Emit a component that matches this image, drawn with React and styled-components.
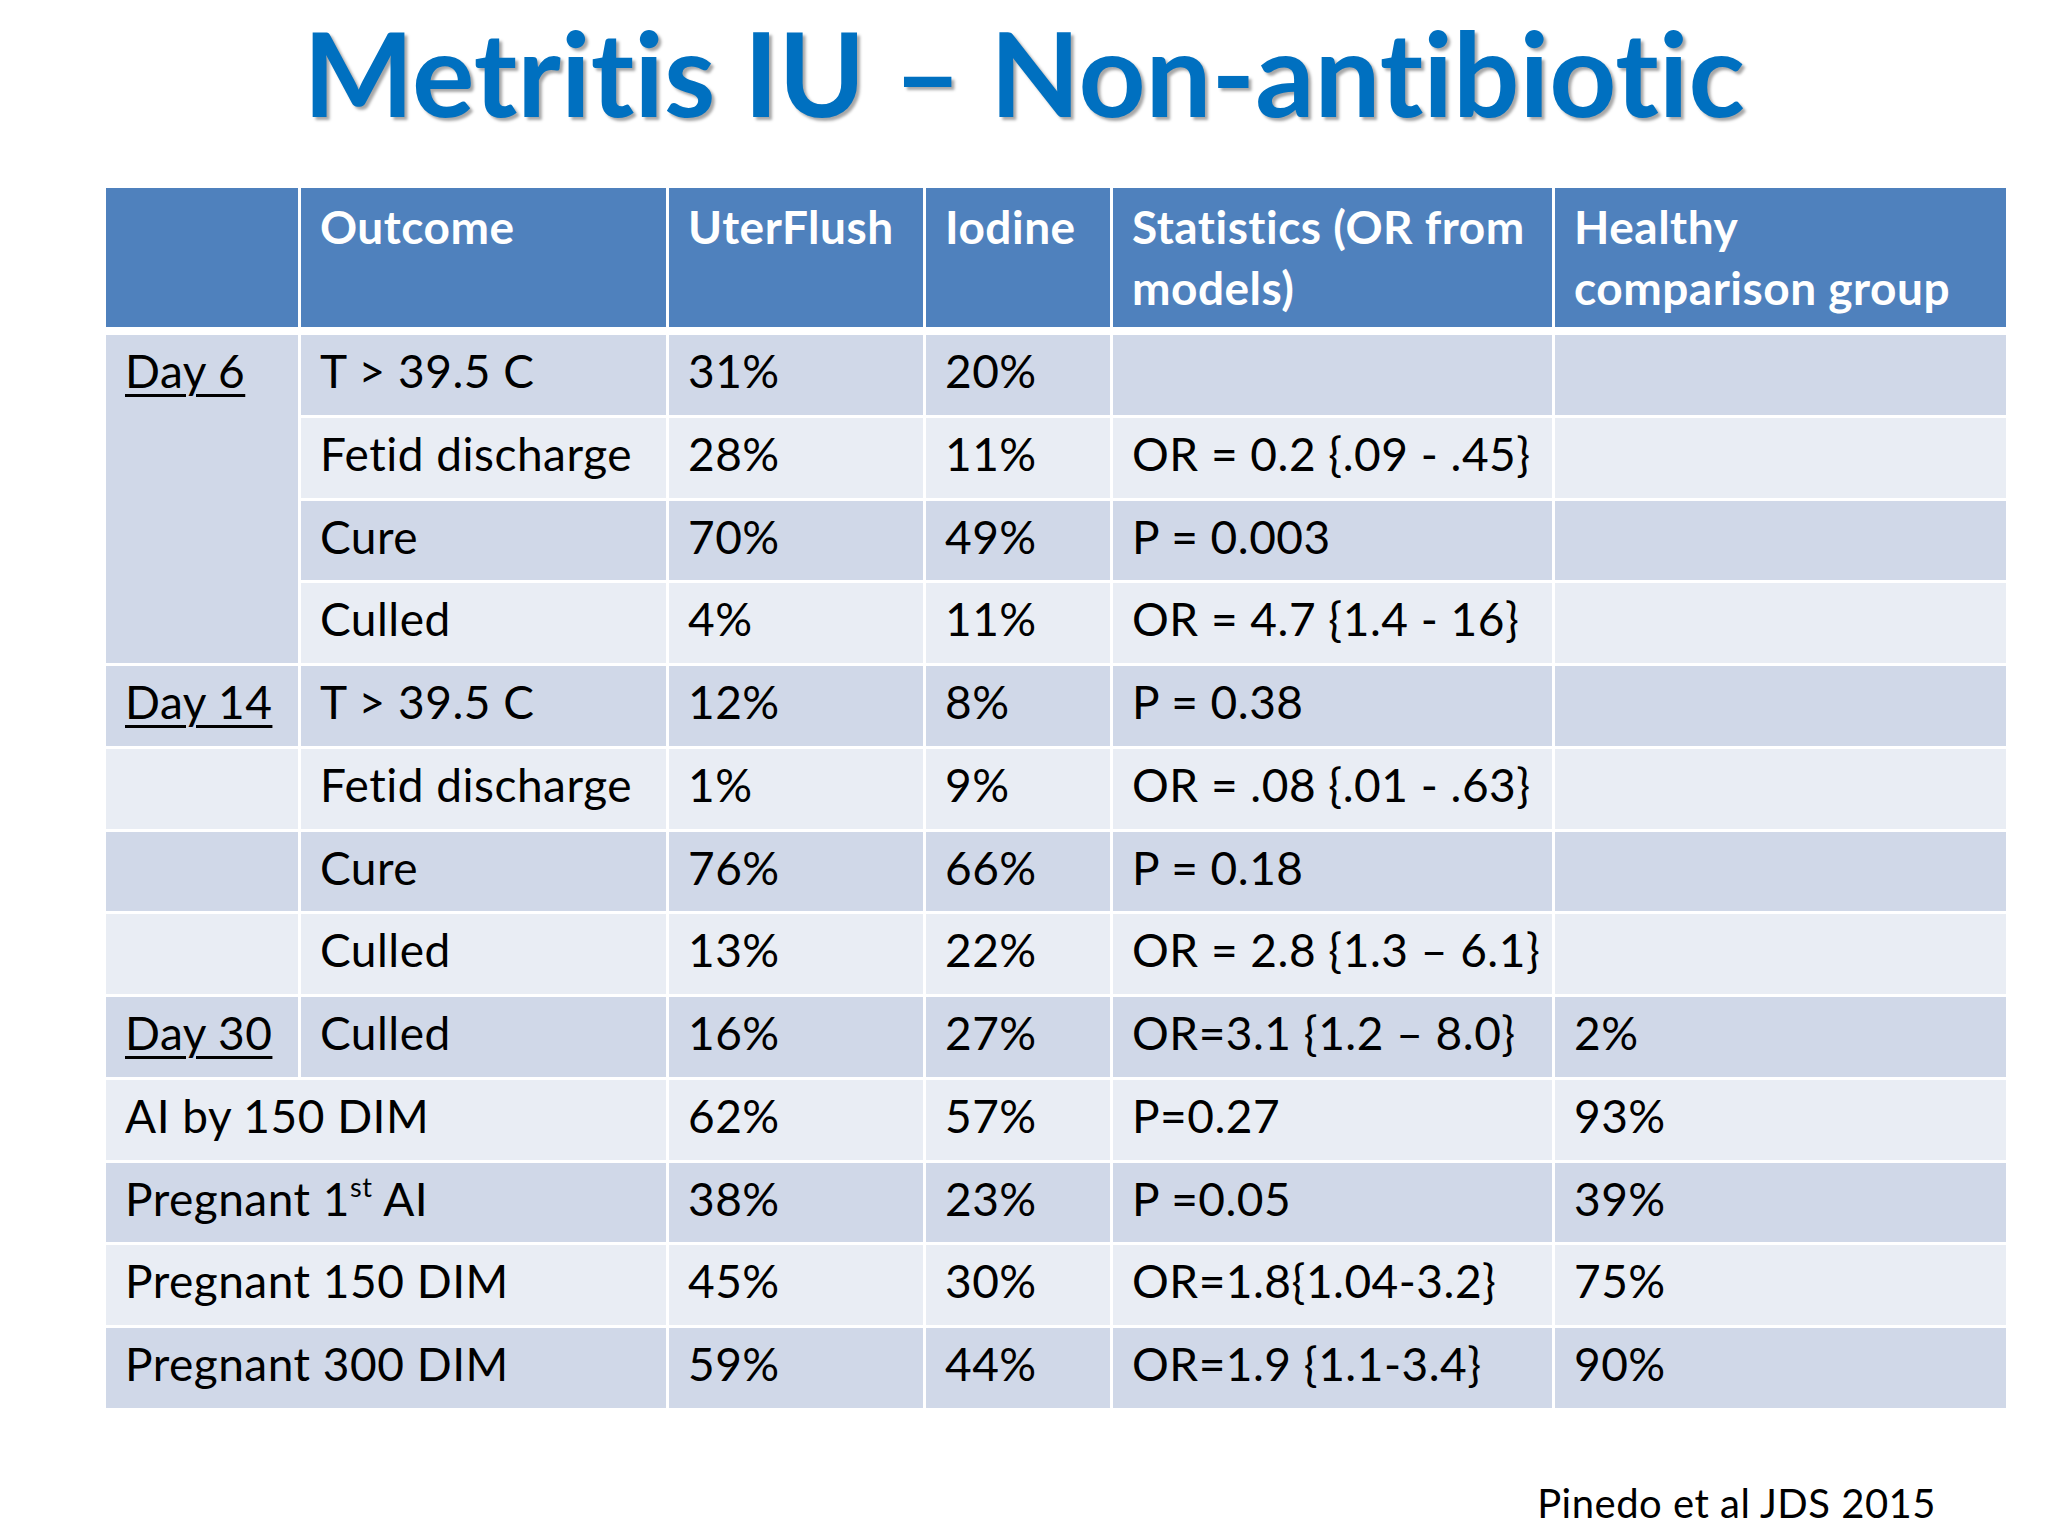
import styled, { createGlobalStyle } from "styled-components";

const GlobalStyle = createGlobalStyle`
  html, body {
    margin: 0;
    padding: 0;
    background: #ffffff;
  }
  body {
    font-family: Lato, "Open Sans", sans-serif;
    font-variant-ligatures: none;
    color: #000000;
  }
`;

const COLS = "192px 365px 254px 184px 439px 451px";

const Slide = styled.div`
  width: 2048px;
  height: 1536px;
  box-sizing: border-box;
  padding: 0 42px 0 106px;
  display: flex;
  flex-direction: column;
`;

const Title = styled.h1`
  margin: 0 0 0 -106px;
  width: 2048px;
  height: 188px;
  box-sizing: border-box;
  padding-top: 0;
  text-align: center;
  font-family: Lato, sans-serif;
  font-weight: 700;
  font-size: 117px;
  line-height: 144px;
  color: #0070c0;
  text-shadow: 3px 3px 3px rgba(0, 0, 0, 0.35);
`;

const HeadGrid = styled.div`
  display: grid;
  grid-template-columns: ${COLS};
  column-gap: 3px;
  height: 139px;
`;

const HeadCell = styled.div`
  background: #4f81bd;
  color: #ffffff;
  font-weight: 700;
  font-size: 46px;
  letter-spacing: 0.5px;
  line-height: 61px;
  padding: 8px 8px 0 19px;
  white-space: nowrap;
`;

const BodyGrid = styled.div`
  display: grid;
  grid-template-columns: ${COLS};
  grid-auto-rows: 79.75px;
  gap: 3px;
  margin-top: 8px;
`;

const Cell = styled.div`
  grid-column: span ${(p) => p.$cols || 1};
  grid-row: span ${(p) => p.$rows || 1};
  background: ${(p) => (p.$dark ? "#d0d8e8" : "#e9edf4")};
  font-size: 46px;
  letter-spacing: 0.5px;
  line-height: 60px;
  padding: 6px 8px 0 19px;
  white-space: nowrap;
  sup {
    font-size: 27px;
    line-height: 0;
    vertical-align: 19px;
  }
`;

const Day = styled.span`
  text-decoration: underline;
  text-decoration-thickness: 3px;
  text-underline-offset: 6px;
`;

const Footer = styled.div`
  margin-top: 72px;
  padding-right: 70px;
  text-align: right;
  font-size: 40px;
  letter-spacing: 0.5px;
  line-height: 46px;
`;

const headers = [
  [],
  ["Outcome"],
  ["UterFlush"],
  ["Iodine"],
  ["Statistics (OR from", "models)"],
  ["Healthy", "comparison group"],
];

const rows = [
  { day: "Day 6", daySpan: 4, outcome: "T > 39.5 C", uf: "31%", io: "20%", stat: "" },
  { outcome: "Fetid discharge", uf: "28%", io: "11%", stat: "OR = 0.2 {.09 - .45}" },
  { outcome: "Cure", uf: "70%", io: "49%", stat: "P = 0.003" },
  { outcome: "Culled", uf: "4%", io: "11%", stat: "OR = 4.7 {1.4 - 16}" },
  { day: "Day 14", outcome: "T > 39.5 C", uf: "12%", io: "8%", stat: "P = 0.38" },
  { day: "", outcome: "Fetid discharge", uf: "1%", io: "9%", stat: "OR = .08 {.01 - .63}" },
  { day: "", outcome: "Cure", uf: "76%", io: "66%", stat: "P = 0.18" },
  { day: "", outcome: "Culled", uf: "13%", io: "22%", stat: "OR = 2.8 {1.3 – 6.1}" },
  { day: "Day 30", outcome: "Culled", uf: "16%", io: "27%", stat: "OR=3.1 {1.2 – 8.0}", healthy: "2%" },
  { wide: "AI by 150 DIM", uf: "62%", io: "57%", stat: "P=0.27", healthy: "93%" },
  {
    wide: (
      <>
        Pregnant 1<sup>st</sup> AI
      </>
    ),
    uf: "38%",
    io: "23%",
    stat: "P =0.05",
    healthy: "39%",
  },
  { wide: "Pregnant 150 DIM", uf: "45%", io: "30%", stat: "OR=1.8{1.04-3.2}", healthy: "75%" },
  { wide: "Pregnant 300 DIM", uf: "59%", io: "44%", stat: "OR=1.9 {1.1-3.4}", healthy: "90%" },
];

function Row({ row, dark }) {
  return (
    <>
      {row.wide && (
        <Cell $dark={dark} $cols={2}>
          {row.wide}
        </Cell>
      )}
      {"day" in row && (
        <Cell $dark={dark} $rows={row.daySpan}>
          {row.day && <Day>{row.day}</Day>}
        </Cell>
      )}
      {!row.wide && <Cell $dark={dark}>{row.outcome}</Cell>}
      <Cell $dark={dark}>{row.uf}</Cell>
      <Cell $dark={dark}>{row.io}</Cell>
      <Cell $dark={dark}>{row.stat}</Cell>
      <Cell $dark={dark}>{row.healthy || ""}</Cell>
    </>
  );
}

export default function App() {
  return (
    <>
      <GlobalStyle />
      <Slide>
        <Title>Metritis IU – Non-antibiotic</Title>
        <HeadGrid>
          {headers.map((lines, i) => (
            <HeadCell key={i}>
              {lines.map((l, j) => (
                <div key={j}>{l}</div>
              ))}
            </HeadCell>
          ))}
        </HeadGrid>
        <BodyGrid>
          {rows.map((r, i) => (
            <Row key={i} row={r} dark={i % 2 === 0} />
          ))}
        </BodyGrid>
        <Footer>Pinedo et al JDS 2015</Footer>
      </Slide>
    </>
  );
}
